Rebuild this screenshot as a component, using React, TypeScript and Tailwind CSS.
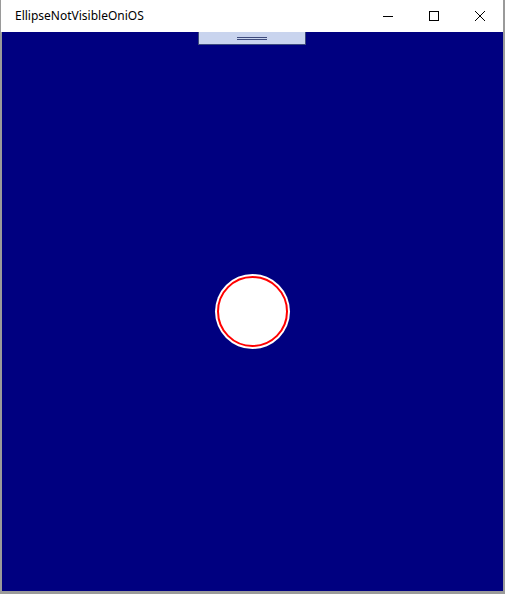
export default function App() {
  return (
    <div className="w-[505px] h-[594px] flex flex-col bg-[#9a9a9a] font-['Noto_Sans',sans-serif]">
      {/* Title bar */}
      <div className="h-[32px] flex items-center bg-white ml-[1px] mr-[2px]">
        <span className="pl-[14px] text-[12px] text-black flex-1">EllipseNotVisibleOniOS</span>
        <div className="w-[46px] h-[32px] flex items-center justify-center">
          <svg width="10" height="10" viewBox="0 0 10 10">
            <path d="M0 5.5h10" stroke="#000" strokeWidth="1" />
          </svg>
        </div>
        <div className="w-[46px] h-[32px] flex items-center justify-center">
          <svg width="10" height="10" viewBox="0 0 10 10">
            <rect x="0.5" y="0.5" width="9" height="9" fill="none" stroke="#000" strokeWidth="1" />
          </svg>
        </div>
        <div className="w-[46px] h-[32px] flex items-center justify-center">
          <svg width="10" height="10" viewBox="0 0 10 10">
            <path d="M0 0L10 10M10 0L0 10" stroke="#000" strokeWidth="1" />
          </svg>
        </div>
      </div>

      {/* Content */}
      <div className="flex-1 ml-[2px] mr-[2px] mb-[3px] bg-[#000080] relative flex flex-col items-center">
        <div className="w-[108px] h-[13px] bg-[#c9d4ee] border border-[#3d4a7c] border-t-0 flex flex-col items-center justify-center gap-[1px] mr-[2px]">
          <div className="w-[30px] h-[1px] bg-[#3d4a7c]" />
          <div className="w-[30px] h-[1px] bg-[#3d4a7c]" />
        </div>
        <div className="flex-1 flex items-center justify-center w-full">
          <div className="w-[75px] h-[75px] rounded-full bg-white flex items-center justify-center mb-[14px]">
            <div className="w-[71px] h-[71px] rounded-full bg-white border-2 border-[#ff0000]" />
          </div>
        </div>
      </div>
    </div>
  );
}
